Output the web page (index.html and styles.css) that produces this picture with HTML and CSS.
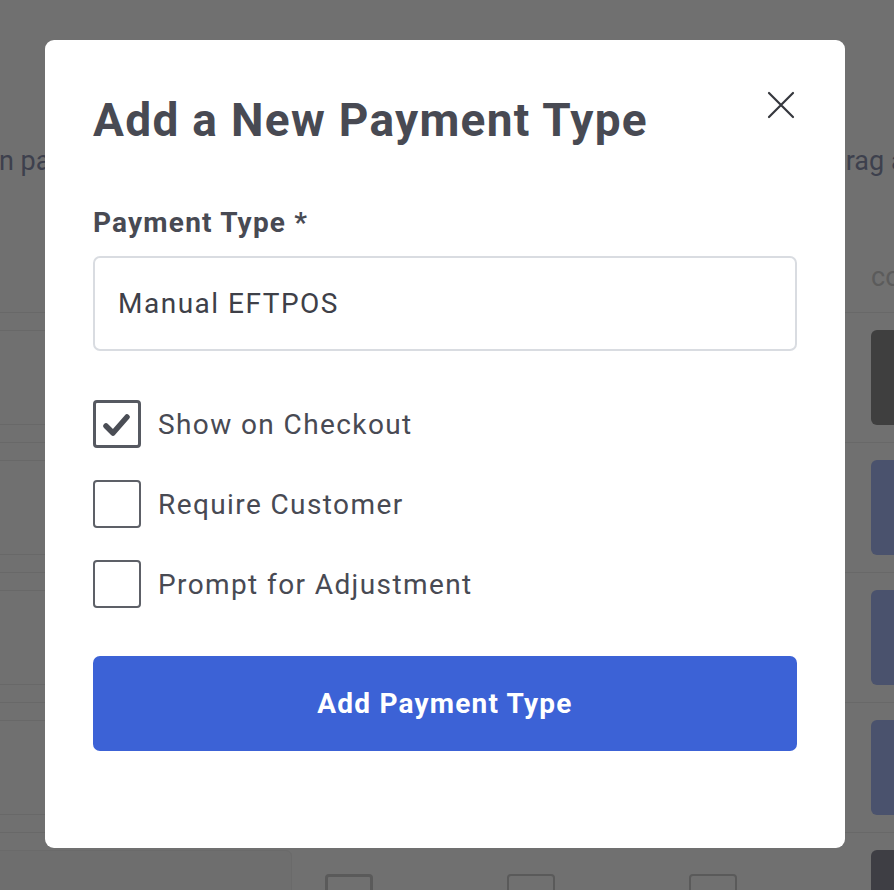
FILE: index.html
```html
<!DOCTYPE html>
<html lang="en">
<head>
<meta charset="utf-8">
<title>Add a New Payment Type</title>
<link rel="stylesheet" href="styles.css">
</head>
<body>
<div class="page">
  <div class="intro">
    <span class="intro-left">n payments</span>
    <span class="intro-right">Drag and drop</span>
  </div>
  <div class="table-head">
    <span class="head-col">co</span>
  </div>
  <div class="row">
    <div class="cell-name"></div>
    <div class="cell-checks"><span class="bg-check"></span><span class="bg-check"></span><span class="bg-check"></span></div>
    <div class="cell-btn btn-dark"></div>
  </div>
  <div class="row">
    <div class="cell-name"></div>
    <div class="cell-checks"><span class="bg-check"></span><span class="bg-check"></span><span class="bg-check"></span></div>
    <div class="cell-btn btn-blue"></div>
  </div>
  <div class="row">
    <div class="cell-name"></div>
    <div class="cell-checks"><span class="bg-check"></span><span class="bg-check"></span><span class="bg-check"></span></div>
    <div class="cell-btn btn-blue"></div>
  </div>
  <div class="row">
    <div class="cell-name"></div>
    <div class="cell-checks"><span class="bg-check"></span><span class="bg-check"></span><span class="bg-check"></span></div>
    <div class="cell-btn btn-blue"></div>
  </div>
  <div class="row">
    <div class="cell-name cell-name-last"></div>
    <div class="cell-checks"><span class="bg-check"></span><span class="bg-check"></span><span class="bg-check"></span></div>
    <div class="cell-btn btn-darker"></div>
  </div>
</div>

<div class="overlay">
  <div class="modal" role="dialog" aria-labelledby="modal-title">
    <div class="modal-head">
      <h1 id="modal-title" class="modal-title">Add a New Payment Type</h1>
      <button class="close" aria-label="Close">
        <svg width="28" height="28" viewBox="0 0 28 28"><path d="M2 2 L26 26 M26 2 L2 26" stroke="#35373d" stroke-width="2.2" stroke-linecap="round" fill="none"/></svg>
      </button>
    </div>
    <label class="field-label" for="ptype">Payment Type *</label>
    <div class="input">
      <span id="ptype" class="input-text">Manual EFTPOS</span>
    </div>
    <div class="checks">
      <div class="check-row">
        <span class="box box-checked">
          <svg width="42" height="42" viewBox="0 0 42 42"><path d="M10 23 L17 30 L31 14" stroke="#4a4d55" stroke-width="5.5" stroke-linecap="round" stroke-linejoin="round" fill="none"/></svg>
        </span>
        <span class="check-label">Show on Checkout</span>
      </div>
      <div class="check-row">
        <span class="box"></span>
        <span class="check-label">Require Customer</span>
      </div>
      <div class="check-row">
        <span class="box"></span>
        <span class="check-label">Prompt for Adjustment</span>
      </div>
    </div>
    <button class="primary">Add Payment Type</button>
  </div>
</div>
</body>
</html>
```
FILE: styles.css
```css
html, body {
  margin: 0;
  padding: 0;
  overflow: hidden;
}
body {
  background: #707070;
  font-family: Roboto, "Liberation Sans", sans-serif;
  width: 894px;
  height: 890px;
}

/* dimmed page underneath */
.page {
  width: 894px;
  height: 890px;
  overflow: hidden;
}
.intro {
  display: flex;
  height: 250px;
  box-sizing: border-box;
  padding-top: 145px;
  font-size: 27px;
  color: #3d404d;
  white-space: nowrap;
  overflow: hidden;
}
.intro-left {
  flex: 0 0 829px;
  margin-left: -1px;
}
.intro-right {
  flex: 0 0 auto;
}
.table-head {
  height: 63px;
  box-sizing: border-box;
  padding-bottom: 8px;
  display: flex;
  justify-content: flex-end;
  align-items: center;
  border-bottom: 1px solid #686868;
  font-size: 27px;
  color: #5b5b5b;
}
.head-col {
  width: 23px;
  overflow: hidden;
  white-space: nowrap;
}
.row {
  height: 130px;
  box-sizing: border-box;
  border-bottom: 1px solid #686868;
  display: flex;
  align-items: center;
}
.cell-name {
  width: 300px;
  margin-left: -8px;
  height: 95px;
  box-sizing: border-box;
  border: 1px solid #686868;
  border-radius: 6px;
}
.cell-name-last {
  border-color: #6a6a6a;
  background: #6e6e6e;
}
.cell-checks {
  display: flex;
  margin-left: 33px;
  gap: 134px;
}
.bg-check {
  width: 48px;
  height: 48px;
  box-sizing: border-box;
  border: 2px solid #5a5a5a;
  border-radius: 4px;
}
.bg-check:first-child {
  border-width: 3px;
}
.cell-btn {
  margin-left: auto;
  width: 40px;
  margin-right: -17px;
  height: 95px;
  border-radius: 6px;
}
.btn-dark { background: #3f3f3f; }
.btn-blue { background: #4a526d; }
.btn-darker { background: #3e3e44; }

/* modal */
.overlay {
  position: fixed;
  inset: 0;
  padding: 40px 0 0 45px;
}
.modal {
  width: 800px;
  height: 808px;
  box-sizing: border-box;
  background: #ffffff;
  border-radius: 9px;
  padding: 48px 48px;
  color: #484a53;
}
.modal-head {
  display: flex;
  justify-content: space-between;
  align-items: flex-start;
}
.modal-title {
  margin: 0;
  font-size: 46px;
  font-weight: 700;
  line-height: 64px;
  letter-spacing: 1.3px;
  color: #484a53;
}
.close {
  border: 0;
  background: none;
  padding: 0;
  margin: 3px 2px 0 0;
  width: 28px;
  height: 28px;
  cursor: pointer;
  display: flex;
}
.field-label {
  display: block;
  margin-top: 54px;
  font-size: 28px;
  font-weight: 700;
  line-height: 34px;
  letter-spacing: 1.2px;
  color: #484a53;
}
.input {
  margin-top: 16px;
  height: 95px;
  box-sizing: border-box;
  border: 2px solid #d9dce1;
  border-radius: 7px;
  display: flex;
  align-items: center;
  padding: 0 23px;
}
.input-text {
  font-size: 28px;
  color: #3e4048;
  letter-spacing: 1.5px;
}
.checks {
  margin-top: 49px;
  display: flex;
  flex-direction: column;
  gap: 32px;
}
.check-row {
  display: flex;
  align-items: center;
  gap: 17px;
  height: 48px;
}
.box {
  width: 48px;
  height: 48px;
  box-sizing: border-box;
  border: 2px solid #5d6067;
  border-radius: 4px;
  display: flex;
  align-items: center;
  justify-content: center;
}
.box-checked {
  border: 3px solid #565961;
}
.check-label {
  font-size: 28px;
  color: #484a53;
  letter-spacing: 1.4px;
}
.primary {
  display: block;
  width: 100%;
  margin-top: 48px;
  height: 95px;
  border: 0;
  border-radius: 7px;
  background: #3c62d6;
  color: #ffffff;
  font-family: Roboto, "Liberation Sans", sans-serif;
  font-size: 28px;
  font-weight: 700;
  letter-spacing: 1.2px;
  cursor: pointer;
}
```
